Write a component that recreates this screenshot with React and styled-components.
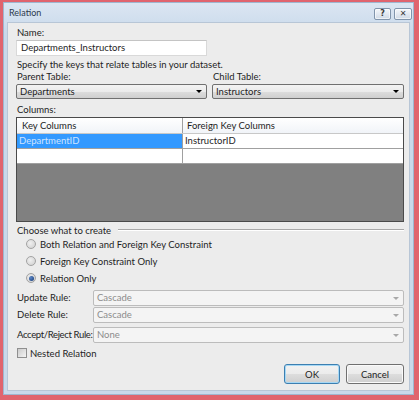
import React from "react";
import styled, { createGlobalStyle } from "styled-components";

const Global = createGlobalStyle`
  html, body { margin: 0; padding: 0; background: #e0646e; }
  body { font-family: Lato, "Noto Sans", sans-serif; font-size: 9.5px; color: #1e1e1e; }
  * { box-sizing: border-box; }
`;

const Frame = styled.div`
  width: 419px;
  height: 400px;
  background: #e0646e;
  padding: 2px 5px 5px 3px;
  display: flex;
`;

const Win = styled.div`
  flex: 1;
  display: flex;
  flex-direction: column;
  border: 1px solid #9fb6cf;
  background: linear-gradient(#dbe6f2, #c9d9eb 30px, #c9d9eb);
`;

const TitleBar = styled.div`
  height: 19px;
  display: flex;
  align-items: flex-start;
  justify-content: space-between;
  padding: 0 1px 0 5px;
  color: #2b3a4c;
`;

const TitleText = styled.span`
  margin-top: 4px;
  line-height: 12px;
  font-size: 9px;
`;

const TitleButtons = styled.div`
  display: flex;
  gap: 3px;
  margin-top: 5px;
`;

const TBtn = styled.div`
  width: ${(p) => p.$w}px;
  height: 12px;
  border: 1px solid #8094ab;
  border-radius: 2px;
  background: linear-gradient(#f4f7fb, #d0dae6);
  box-shadow: inset 0 0 0 1px rgba(255, 255, 255, 0.6);
  display: flex;
  align-items: center;
  justify-content: center;
  font-size: 8px;
  line-height: 1;
  color: #3a3a3a;
  font-family: "DejaVu Sans", sans-serif;
  font-weight: bold;
`;

const Client = styled.div`
  flex: 1;
  margin: 0 3px 3px 3px;
  background: #ececec;
  border: 1px solid #b8c6d6;
  padding: 4px 5px 0 8px;
  display: flex;
  flex-direction: column;
`;

const Label = styled.div`
  line-height: 12px;
  height: 12px;
  margin-top: ${(p) => p.$mt || 0}px;
  padding-left: 1px;
  white-space: nowrap;
  letter-spacing: ${(p) => (p.$tight ? "-0.35px" : "normal")};
`;

const TextBox = styled.div`
  width: 191px;
  height: 16px;
  margin-top: 1px;
  background: #fff;
  border: 1px solid #d9d9d9;
  border-top-color: #c4c4c4;
  padding: 0 4px;
  line-height: 14px;
`;

const Row2 = styled.div`
  display: grid;
  grid-template-columns: 191px 192px;
  column-gap: 5px;
  row-gap: 1px;
`;

const Select = styled.div`
  height: ${(p) => p.$h || 15}px;
  border: 1px solid ${(p) => (p.$disabled ? "#bcbcbc" : "#707070")};
  border-radius: 2px;
  background: ${(p) =>
    p.$disabled
      ? "#f4f4f4"
      : "linear-gradient(#f3f3f3 0%, #ebebeb 50%, #dddddd 51%, #cfcfcf 100%)"};
  color: ${(p) => (p.$disabled ? "#8c8c8c" : "#1e1e1e")};
  display: flex;
  align-items: center;
  justify-content: space-between;
  padding: 0 4px 0 3px;
  line-height: 12px;
`;

const Arrow = styled.div`
  width: 0;
  height: 0;
  border-left: 3px solid transparent;
  border-right: 3px solid transparent;
  border-top: 3px solid ${(p) => (p.$disabled ? "#a8a8a8" : "#000")};
`;

const Grid = styled.div`
  margin-top: 1px;
  height: 105px;
  border: 1px solid #4a4a4a;
  background: #808080;
  display: flex;
  flex-direction: column;
`;

const GRow = styled.div`
  display: grid;
  grid-template-columns: 166px 1fr;
  height: ${(p) => p.$h}px;
  background: #fff;
  border-bottom: 1px solid #a0a0a0;
`;

const HeaderRow = styled(GRow)`
  background: linear-gradient(#ffffff, #f1f4f8);
  border-bottom: 1px solid #c8c8c8;
`;

const Cell = styled.div`
  border-right: ${(p) => (p.$last ? "none" : "1px solid #a0a0a0")};
  padding-left: ${(p) => p.$pad ?? 3}px;
  line-height: ${(p) => p.$h}px;
  background: ${(p) => (p.$sel ? "#3399ff" : "transparent")};
  color: ${(p) => (p.$sel ? "#cfe4ff" : "#1e1e1e")};
  white-space: nowrap;
`;

const GroupHead = styled.div`
  display: flex;
  align-items: center;
  gap: 7px;
  margin-top: 2px;
  height: 12px;
  padding-left: 1px;
`;

const GroupLine = styled.div`
  flex: 1;
  height: 2px;
  margin-top: -1px;
  border-top: 1px solid #a8a8a8;
  border-bottom: 1px solid #fff;
`;

const Radios = styled.div`
  display: flex;
  flex-direction: column;
  padding-left: 10px;
  margin-top: 1px;
  gap: 3px;
`;

const RadioRow = styled.div`
  display: flex;
  align-items: center;
  gap: 4px;
  height: 14px;
`;

const RadioDot = styled.div`
  width: 10px;
  height: 10px;
  border-radius: 50%;
  border: 1px solid #a3a3a3;
  background: radial-gradient(circle at 40% 40%, #f0f0f0 0%, #cdcdcd 100%);
  display: flex;
  align-items: center;
  justify-content: center;
  &::after {
    content: "";
    display: ${(p) => (p.$on ? "block" : "none")};
    width: 5px;
    height: 5px;
    border-radius: 50%;
    background: radial-gradient(circle at 35% 35%, #5a86c8, #173a72);
  }
`;

const RuleRow = styled.div`
  display: grid;
  grid-template-columns: 77px 1fr;
  align-items: center;
  margin-top: ${(p) => p.$mt || 0}px;
`;

const CheckRow = styled.div`
  display: flex;
  align-items: center;
  gap: 3px;
  height: 14px;
  margin-top: 3px;
  padding-left: 1px;
`;

const CheckBox = styled.div`
  width: 10px;
  height: 10px;
  border: 1px solid #8f8f8f;
  background: linear-gradient(135deg, #cbcbcb, #f4f4f4);
`;

const Footer = styled.div`
  display: flex;
  justify-content: flex-end;
  gap: 6px;
  margin-top: 4px;
`;

const Button = styled.div`
  width: ${(p) => p.$w}px;
  height: 20px;
  border: 1px solid ${(p) => (p.$def ? "#3c7fb1" : "#707070")};
  border-radius: 3px;
  background: linear-gradient(#f2f2f2 0%, #ebebeb 50%, #dddddd 51%, #cfcfcf 100%);
  box-shadow: inset 0 0 0 1px ${(p) => (p.$def ? "#a6d8f5" : "#fafafa")};
  display: flex;
  align-items: center;
  justify-content: center;
  color: #1e1e1e;
`;

export default function App() {
  return (
    <>
      <Global />
      <Frame>
        <Win>
          <TitleBar>
            <TitleText>Relation</TitleText>
            <TitleButtons>
              <TBtn $w={17}>?</TBtn>
              <TBtn $w={18}>✕</TBtn>
            </TitleButtons>
          </TitleBar>
          <Client>
            <Label>Name:</Label>
            <TextBox>Departments_Instructors</TextBox>
            <Label $mt={3}>Specify the keys that relate tables in your dataset.</Label>
            <Row2>
              <Label>Parent Table:</Label>
              <Label>Child Table:</Label>
              <Select>
                <span>Departments</span>
                <Arrow />
              </Select>
              <Select>
                <span>Instructors</span>
                <Arrow />
              </Select>
            </Row2>
            <Label $mt={5}>Columns:</Label>
            <Grid>
              <HeaderRow $h={16}>
                <Cell $h={15} $pad={5}>Key Columns</Cell>
                <Cell $h={15} $pad={4} $last>Foreign Key Columns</Cell>
              </HeaderRow>
              <GRow $h={15}>
                <Cell $h={14} $pad={2} $sel>DepartmentID</Cell>
                <Cell $h={14} $pad={2} $last>InstructorID</Cell>
              </GRow>
              <GRow $h={15}>
                <Cell $h={14} />
                <Cell $h={14} $last />
              </GRow>
            </Grid>
            <GroupHead>
              <span>Choose what to create</span>
              <GroupLine />
            </GroupHead>
            <Radios>
              <RadioRow>
                <RadioDot />
                <span>Both Relation and Foreign Key Constraint</span>
              </RadioRow>
              <RadioRow>
                <RadioDot />
                <span>Foreign Key Constraint Only</span>
              </RadioRow>
              <RadioRow>
                <RadioDot $on />
                <span>Relation Only</span>
              </RadioRow>
            </Radios>
            <RuleRow $mt={5}>
              <Label>Update Rule:</Label>
              <Select $disabled $h={16}>
                <span>Cascade</span>
                <Arrow $disabled />
              </Select>
            </RuleRow>
            <RuleRow $mt={1}>
              <Label>Delete Rule:</Label>
              <Select $disabled $h={16}>
                <span>Cascade</span>
                <Arrow $disabled />
              </Select>
            </RuleRow>
            <RuleRow $mt={4}>
              <Label $tight>Accept/Reject Rule:</Label>
              <Select $disabled $h={16}>
                <span>None</span>
                <Arrow $disabled />
              </Select>
            </RuleRow>
            <CheckRow>
              <CheckBox />
              <span>Nested Relation</span>
            </CheckRow>
            <Footer>
              <Button $w={56} $def>OK</Button>
              <Button $w={58}>Cancel</Button>
            </Footer>
          </Client>
        </Win>
      </Frame>
    </>
  );
}
